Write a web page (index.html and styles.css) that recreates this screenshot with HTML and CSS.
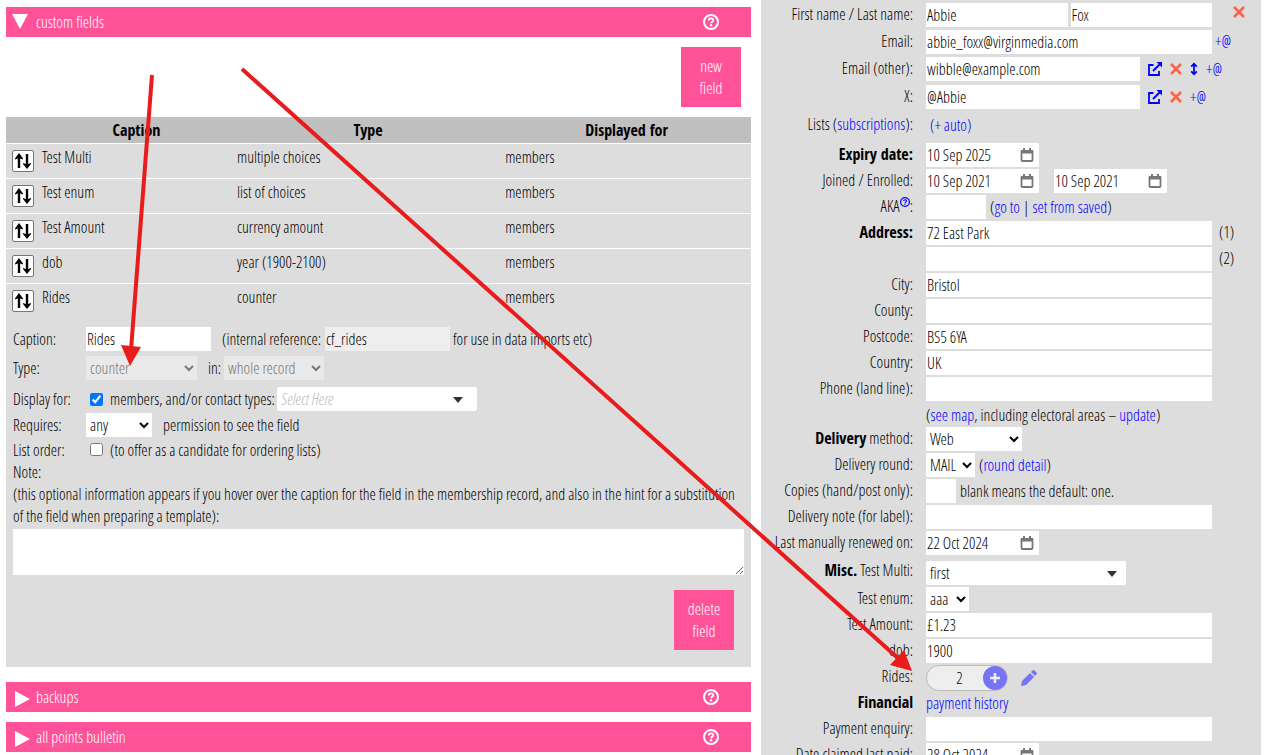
FILE: index.html
```html
<!DOCTYPE html>
<html lang="en">
<head>
  <meta charset="utf-8">
  <title>Membership record</title>
  <link rel="stylesheet" href="styles.css">
</head>
<body>
  <!-- shared icons -->
  <svg class="symbols" aria-hidden="true">
    <symbol id="help" viewBox="0 0 16 16">
      <circle cx="8" cy="8" r="7" fill="none" stroke="currentColor" stroke-width="2"/>
      <path d="M5.8 6.4c0-2.7 4.5-2.7 4.5-.1 0 1.6-2.2 1.5-2.2 3" fill="none" stroke="currentColor" stroke-width="1.8"/>
      <circle cx="8.1" cy="11.3" r="1.2" fill="currentColor"/>
    </symbol>
    <symbol id="sort" viewBox="0 0 22 22">
      <rect x="0.5" y="0.5" width="21" height="21" rx="1.5" fill="#fff" stroke="#767676"/>
      <path d="M7 18V5M15 4v13" fill="none" stroke="#000" stroke-width="2.400"/>
      <path d="M3 8.500L7 3l4 5.500v1L7 8 3 9.500zM11 13l4 1.500L19 13v1l-4 5-4-5z" fill="#000"/>
    </symbol>
    <symbol id="calendar" viewBox="0 0 14 14">
      <path d="M1.500 3.500h11V12a1 1 0 0 1-1 1h-9a1 1 0 0 1-1-1z" fill="none" stroke="#777" stroke-width="1.800"/>
      <path d="M1 2h12v3.500H1zM3 0h2v3H3zM9 0h2v3H9z" fill="#777"/>
    </symbol>
    <symbol id="open" viewBox="0 0 14 14">
      <path d="M5.500 3H1v10h10V9M5 9l7-7" fill="none" stroke="#00f" stroke-width="1.800"/>
      <path d="M8.500 0H14v5.500z" fill="#00f"/>
    </symbol>
    <symbol id="cross" viewBox="0 0 12 12">
      <path d="M1 1l10 10M11 1L1 11" fill="none" stroke="#ff6347" stroke-width="2.600"/>
    </symbol>
    <symbol id="updown" viewBox="0 0 10 16">
      <path d="M5 2v12M1.500 5L5 1.500 8.500 5M1.500 11L5 14.500 8.500 11" fill="none" stroke="#00f" stroke-width="2.200"/>
    </symbol>
  </svg>

  <div class="page">
    <main class="settings">
      <h2 class="bar">
        <button type="button" class="bar-toggle"><svg class="mark" viewBox="0 0 16 16"><path d="M0 0h16L8 15z" fill="#fff"/></svg>custom fields</button>
        <a href="#help" class="bar-help" aria-label="Help"><svg><use href="#help"/></svg></a>
      </h2>

      <div class="actions">
        <button type="button" class="square">new<br>field</button>
      </div>

      <table class="fields">
        <colgroup><col class="col-sort"><col class="col-caption"><col class="col-type"><col></colgroup>
        <thead>
          <tr><th></th><th>Caption</th><th>Type</th><th>Displayed for</th></tr>
        </thead>
        <tbody>
          <tr><td><button type="button" class="sort" aria-label="Move"><svg><use href="#sort"/></svg></button></td><td>Test Multi</td><td>multiple choices</td><td>members</td></tr>
          <tr><td><button type="button" class="sort" aria-label="Move"><svg><use href="#sort"/></svg></button></td><td>Test enum</td><td>list of choices</td><td>members</td></tr>
          <tr><td><button type="button" class="sort" aria-label="Move"><svg><use href="#sort"/></svg></button></td><td>Test Amount</td><td>currency amount</td><td>members</td></tr>
          <tr><td><button type="button" class="sort" aria-label="Move"><svg><use href="#sort"/></svg></button></td><td>dob</td><td>year (1900-2100)</td><td>members</td></tr>
          <tr><td><button type="button" class="sort" aria-label="Move"><svg><use href="#sort"/></svg></button></td><td>Rides</td><td>counter</td><td>members</td></tr>
        </tbody>
      </table>

      <form class="editor">
        <div class="line line-gap">
          <label class="name" for="caption">Caption:</label>
          <input id="caption" class="medium" type="text" value="Rides">
          <label class="after ref-label" for="ref">(internal reference:</label>
          <input id="ref" class="medium readonly" type="text" value="cf_rides" readonly>
          <span class="close">for use in data imports etc)</span>
        </div>
        <div class="line line-wide">
          <label class="name" for="type">Type:</label>
          <select id="type" class="type-select" disabled><option>counter</option></select>
          <label class="after in-label" for="within">in:</label>
          <select id="within" class="within-select" disabled><option>whole record</option></select>
        </div>
        <div class="line">
          <span class="name">Display for:</span>
          <input id="members" type="checkbox" checked>
          <label class="types-label" for="members">members, and/or contact types:</label>
          <span class="combo"><select class="placeholder" aria-label="Contact types"><option>Select Here</option></select></span>
        </div>
        <div class="line">
          <label class="name" for="requires">Requires:</label>
          <select id="requires" class="requires-select"><option>any</option></select>
          <span class="after">permission to see the field</span>
        </div>
        <div class="line line-last">
          <span class="name">List order:</span>
          <input id="order" type="checkbox">
          <label for="order">(to offer as a candidate for ordering lists)</label>
        </div>
        <label class="note" for="note">Note:<br>(this optional information appears if you hover over the caption for the field in the membership record, and also in the hint for a substitution of the field when preparing a template):</label>
        <textarea id="note"></textarea>
        <div class="actions actions-end">
          <button type="button" class="square">delete<br>field</button>
        </div>
      </form>

      <h2 class="bar">
        <button type="button" class="bar-toggle"><svg class="mark" viewBox="0 0 16 16"><path d="M3 2l15 8L3 18z" fill="#fff"/></svg>backups</button>
        <a href="#help" class="bar-help" aria-label="Help"><svg><use href="#help"/></svg></a>
      </h2>
      <h2 class="bar">
        <button type="button" class="bar-toggle"><svg class="mark" viewBox="0 0 16 16"><path d="M3 2l15 8L3 18z" fill="#fff"/></svg>all points bulletin</button>
        <a href="#help" class="bar-help" aria-label="Help"><svg><use href="#help"/></svg></a>
      </h2>
    </main>

    <form class="record">
      <div class="row row-tall">
        <label for="first">First name / Last name:</label>
        <div class="value names">
          <input id="first" type="text" value="Abbie">
          <input type="text" value="Fox" aria-label="Last name">
        </div>
        <a href="#close" class="icon close-record" aria-label="Close"><svg class="cross"><use href="#cross"/></svg></a>
      </div>
      <div class="row row-tall">
        <label for="email">Email:</label>
        <div class="value"><input id="email" class="full" type="text" value="abbie_foxx@virginmedia.com"></div>
        <a href="#add">+@</a>
      </div>
      <div class="row row-other">
        <label for="email2">Email (other):</label>
        <div class="value value-icons">
          <input id="email2" class="long" type="text" value="wibble@example.com">
          <a href="#open" class="icon" aria-label="Open"><svg class="open"><use href="#open"/></svg></a>
          <a href="#remove" class="icon" aria-label="Remove"><svg class="cross"><use href="#cross"/></svg></a>
          <a href="#swap" class="icon" aria-label="Swap"><svg class="updown"><use href="#updown"/></svg></a>
          <a href="#add">+@</a>
        </div>
      </div>
      <div class="row row-other">
        <label for="x">X:</label>
        <div class="value value-icons">
          <input id="x" class="long" type="text" value="@Abbie">
          <a href="#open" class="icon" aria-label="Open"><svg class="open"><use href="#open"/></svg></a>
          <a href="#remove" class="icon" aria-label="Remove"><svg class="cross"><use href="#cross"/></svg></a>
          <a href="#add">+@</a>
        </div>
      </div>
      <div class="row row-lists">
        <span class="label">Lists (<a href="#subscriptions">subscriptions</a>):</span>
        <div class="value indent"><a href="#auto">(+ auto)</a></div>
      </div>
      <div class="row">
        <label for="expiry"><b>Expiry date:</b></label>
        <div class="value"><span class="date"><input id="expiry" type="text" value="10 Sep 2025"><button type="button" aria-label="Pick date"><svg><use href="#calendar"/></svg></button></span></div>
      </div>
      <div class="row">
        <label for="joined">Joined / Enrolled:</label>
        <div class="value value-dates">
          <span class="date"><input id="joined" type="text" value="10 Sep 2021"><button type="button" aria-label="Pick date"><svg><use href="#calendar"/></svg></button></span>
          <span class="date"><input type="text" value="10 Sep 2021" aria-label="Enrolled"><button type="button" aria-label="Pick date"><svg><use href="#calendar"/></svg></button></span>
        </div>
      </div>
      <div class="row">
        <label for="aka">AKA<svg class="tiny-help"><use href="#help"/></svg>:</label>
        <div class="value"><input id="aka" class="short" type="text"><span>(<a href="#goto">go to</a> | <a href="#saved">set from saved</a>)</span></div>
      </div>
      <div class="row">
        <label for="address1"><b>Address:</b></label>
        <div class="value"><input id="address1" class="full" type="text" value="72 East Park"></div>
        <span class="side">(1)</span>
      </div>
      <div class="row">
        <span></span>
        <div class="value"><input class="full" type="text" aria-label="Address line 2"></div>
        <span class="side">(2)</span>
      </div>
      <div class="row">
        <label for="city">City:</label>
        <div class="value"><input id="city" class="full" type="text" value="Bristol"></div>
      </div>
      <div class="row">
        <label for="county">County:</label>
        <div class="value"><input id="county" class="full" type="text"></div>
      </div>
      <div class="row">
        <label for="postcode">Postcode:</label>
        <div class="value"><input id="postcode" class="full" type="text" value="BS5 6YA"></div>
      </div>
      <div class="row">
        <label for="country">Country:</label>
        <div class="value"><input id="country" class="full" type="text" value="UK"></div>
      </div>
      <div class="row">
        <label for="phone">Phone (land line):</label>
        <div class="value"><input id="phone" class="full" type="text"></div>
      </div>
      <div class="row row-text">
        <span></span>
        <div class="value"><span>(<a href="#map">see map</a>, including electoral areas – <a href="#update">update</a>)</span></div>
      </div>
      <div class="row">
        <label for="delivery"><b>Delivery</b> method:</label>
        <div class="value"><select id="delivery" class="delivery-select"><option>Web</option></select></div>
      </div>
      <div class="row">
        <label for="round">Delivery round:</label>
        <div class="value"><select id="round" class="round-select"><option>MAIL</option></select><span>(<a href="#round">round detail</a>)</span></div>
      </div>
      <div class="row">
        <label for="copies">Copies (hand/post only):</label>
        <div class="value"><input id="copies" class="tiny" type="text"><span>blank means the default: one.</span></div>
      </div>
      <div class="row">
        <label for="dnote">Delivery note (for label):</label>
        <div class="value"><input id="dnote" class="full" type="text"></div>
      </div>
      <div class="row">
        <label for="renewed">Last manually renewed on:</label>
        <div class="value"><span class="date"><input id="renewed" type="text" value="22 Oct 2024"><button type="button" aria-label="Pick date"><svg><use href="#calendar"/></svg></button></span></div>
      </div>
      <div class="row row-misc">
        <label for="multi"><b>Misc.</b> Test Multi:</label>
        <div class="value"><span class="combo"><select id="multi"><option>first</option></select></span></div>
      </div>
      <div class="row">
        <label for="enum">Test enum:</label>
        <div class="value"><select id="enum" class="enum-select"><option>aaa</option></select></div>
      </div>
      <div class="row">
        <label for="amount">Test Amount:</label>
        <div class="value"><input id="amount" class="full" type="text" value="£1.23"></div>
      </div>
      <div class="row">
        <label for="dob">dob:</label>
        <div class="value"><input id="dob" class="full" type="text" value="1900"></div>
      </div>
      <div class="row">
        <label for="rides">Rides:</label>
        <div class="value value-rides">
          <span class="counter">
            <input id="rides" type="text" value="2">
            <button type="button" aria-label="Add one"><svg viewBox="0 0 24 24"><path d="M12 7v10M7 12h10" stroke="#eee" stroke-width="2.500"/></svg></button>
          </span>
          <a href="#edit" class="icon" aria-label="Edit"><svg class="pencil" viewBox="0 0 18 18"><path d="M1 17l1-5 8-8 4 4-8 8zM11 3l1.500-1.500q1-1 2.300.2l1.600 1.600q1 1 .1 2L15 7z" fill="#7474f4"/></svg></a>
        </div>
      </div>
      <div class="row">
        <b class="label">Financial</b>
        <div class="value"><a href="#payments">payment history</a></div>
      </div>
      <div class="row">
        <label for="enquiry">Payment enquiry:</label>
        <div class="value"><input id="enquiry" class="full" type="text"></div>
      </div>
      <div class="row">
        <label for="claimed">Date claimed last paid:</label>
        <div class="value"><span class="date"><input id="claimed" type="text" value="28 Oct 2024"><button type="button" aria-label="Pick date"><svg><use href="#calendar"/></svg></button></span></div>
      </div>
    </form>
  </div>

  <!-- pointers from the field type to the counter it makes -->
  <svg class="pointers" width="920" height="680" aria-hidden="true">
    <path d="M152 75L131 350M242 69L900 660" fill="none" stroke="#e81c1c" stroke-width="4"/>
    <path d="M130 366l-9-21 20 2zM912 671l-22-6 14-15z" fill="#e81c1c"/>
  </svg>
</body>
</html>
```
FILE: styles.css
```css
* {
  box-sizing: border-box;
}

body {
  margin: 0;
  background: #fff;
  color: #000;
  font-family: "Open Sans Condensed Light", "OpenSans-CondensedLight", "Open Sans Light Condensed", "Liberation Sans Narrow", "Open Sans", sans-serif;
  font-size: 16px;
  font-weight: 300;
  line-height: 22px;
}

a {
  color: #00f;
  text-decoration: none;
}

input, select, textarea, button {
  margin: 0;
  padding: 0;
  border: 0;
  border-radius: 0;
  font: inherit;
  color: inherit;
}

input[type="text"], select {
  height: 24px;
  background: #fff;
}

input[type="text"] {
  padding: 0 1px;
}

button {
  background: none;
  cursor: pointer;
}

.symbols {
  display: none;
}

.page {
  display: flex;
  gap: 10px;
  height: 100vh;
  padding: 0 3px 0 6px;
}

.settings, .record {
  overflow-y: auto;
  scrollbar-width: none;
}

/* left pane */

.settings {
  flex: 1;
  min-width: 0;
  padding-top: 7px;
}

.bar {
  display: flex;
  align-items: center;
  justify-content: space-between;
  height: 30px;
  margin: 0 0 10px;
  padding: 0 32px 0 6px;
  background: #ff5299;
  color: #fff;
  font-size: 16px;
  font-weight: 300;
}

.bar-toggle {
  display: flex;
  align-items: center;
  gap: 8px;
}

.mark {
  width: 16px;
  height: 16px;
  overflow: visible;
}

.bar-help {
  color: #fff;
}

.bar-help svg {
  display: block;
  width: 16px;
  height: 16px;
}

.actions {
  display: flex;
  justify-content: flex-end;
  padding: 0 10px 10px;
}

.square {
  width: 60px;
  height: 60px;
  background: #ff5299;
  color: #fff;
}

.fields {
  width: 100%;
  table-layout: fixed;
  border-collapse: collapse;
  background: #ddd;
}

.col-sort {
  width: 33px;
}

.col-caption {
  width: 195px;
}

.col-type {
  width: 36%;
}

.fields th {
  height: 26px;
  padding: 0;
  background: #c0c0c0;
}

.fields td {
  height: 35px;
  padding: 2px 3px;
  border-top: 1px solid #fff;
  vertical-align: top;
}

.sort {
  display: block;
  margin: 4px 3px 0;
}

.sort svg {
  display: block;
  width: 22px;
  height: 22px;
}

.editor {
  margin-bottom: 15px;
  padding: 9px 7px 17px;
  background: #ddd;
}

.line {
  display: flex;
  align-items: center;
  height: 26px;
  white-space: nowrap;
}

.line-gap {
  height: 24px;
  margin-bottom: 5px;
}

.line-wide {
  height: 24px;
  margin-bottom: 6px;
}

.line-last {
  height: 23px;
}

.name {
  flex: none;
  width: 73px;
}

.medium {
  width: 125px;
}

.readonly[type="text"] {
  background: #eee;
}

.after {
  margin-left: 11px;
}

.ref-label {
  width: 103px;
}

.in-label {
  width: 16px;
}

.close {
  margin-left: 3px;
}

.editor select:disabled {
  background: #e9e9e9;
  color: #777;
  opacity: 1;
}

.type-select {
  width: 111px;
}

.within-select {
  width: 100px;
}

.requires-select {
  width: 66px;
}

input[type="checkbox"] {
  width: 13px;
  height: 13px;
  margin: 0 7px 0 4px;
}

.types-label {
  width: 167px;
}

.combo {
  position: relative;
}

.combo select {
  width: 200px;
  display: block;
  padding: 0 4px;
  border-radius: 2px;
  appearance: none;
}

/* drop-down arrow over the box */
.combo::after {
  content: "";
  position: absolute;
  top: 10px;
  right: 14px;
  border: 5px solid transparent;
  border-top: 6px solid #333;
  border-bottom: 0;
  pointer-events: none;
}

.record .combo::after {
  right: 9px;
}

.combo .placeholder {
  color: #bbb;
  font-style: italic;
}

.note {
  display: block;
  margin-bottom: 2px;
}

textarea {
  display: block;
  width: 100%;
  height: 46px;
  background: #fff;
}

.actions-end {
  padding: 15px 10px 0;
}

/* right pane */

.record {
  flex: none;
  width: 500px;
  padding-top: 3px;
  background: #ddd;
}

.row {
  display: grid;
  grid-template-columns: 152px auto 1fr;
  column-gap: 13px;
  height: 26px;
}

.row-tall {
  height: 27px;
}

.row-other {
  height: 28px;
}

.row-lists {
  height: 30px;
}

.row-text {
  height: 24px;
}

.row-misc {
  height: 30px;
  padding-top: 4px;
}

.row > label, .label {
  text-align: right;
  white-space: nowrap;
}

.row-misc > label {
  margin-top: -2px;
}

.row > a {
  margin-left: -10px;
}

.row > .side {
  margin-left: -6px;
}

.row > .close-record {
  height: 17px;
  margin-left: 8px;
}

b, th {
  font-family: "Open Sans Condensed", "Liberation Sans Narrow", "Open Sans", sans-serif;
  font-weight: bold;
}

.value {
  display: flex;
  gap: 4px;
  align-items: center;
  height: 24px;
  white-space: nowrap;
}

.names {
  gap: 3px;
  width: 286px;
}

.names input {
  flex: 1;
  min-width: 0;
}

.full {
  width: 286px;
}

.long {
  width: 214px;
}

.short {
  width: 60px;
}

.tiny {
  width: 30px;
}

.value-icons {
  gap: 8px;
}

.value-dates {
  gap: 15px;
}

.indent {
  padding-left: 4px;
}

.icon {
  display: flex;
  align-items: center;
}

.open {
  width: 14px;
  height: 14px;
}

.cross {
  width: 12px;
  height: 12px;
}

.updown {
  width: 8px;
  height: 16px;
}

.tiny-help {
  width: 10px;
  height: 10px;
  color: #00f;
  vertical-align: 5px;
}

.date {
  display: flex;
  width: 113px;
  background: #fff;
}

.date input {
  flex: 1;
  min-width: 0;
}

.date button {
  padding-right: 5px;
}

.date svg {
  display: block;
  width: 14px;
  height: 14px;
}

.delivery-select {
  width: 96px;
}

.round-select {
  width: 49px;
}

.enum-select {
  width: 43px;
}

.value-rides {
  gap: 12px;
  height: 26px;
}

.counter {
  display: flex;
  width: 82px;
  height: 26px;
  border: 1px solid #bbb;
  border-radius: 13px;
  background: #eee;
}

.counter input[type="text"] {
  flex: 1;
  min-width: 0;
  padding-left: 10px;
  background: none;
  text-align: center;
}

.counter button {
  width: 24px;
  height: 24px;
  border-radius: 12px;
  background: #7474f4;
}

.counter svg {
  display: block;
}

.pencil {
  width: 18px;
  height: 18px;
}

.pointers {
  position: absolute;
  top: 0;
  left: 0;
  pointer-events: none;
}
```
